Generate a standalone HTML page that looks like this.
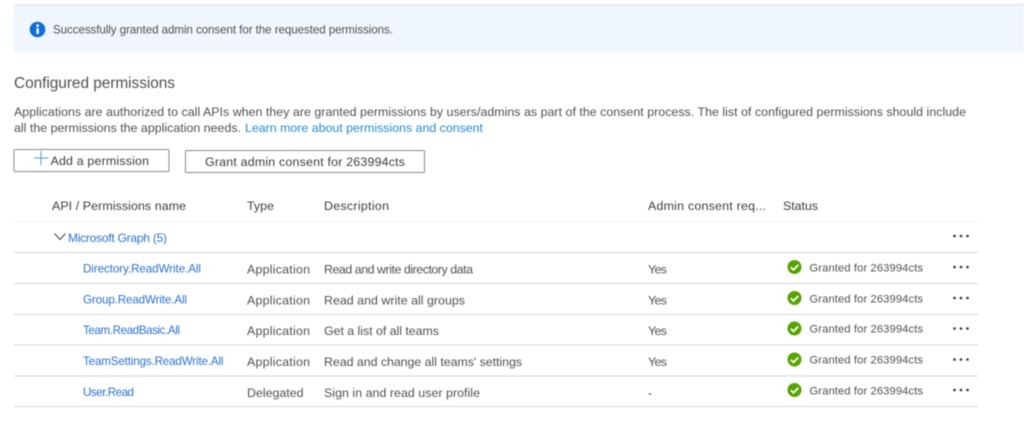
<!DOCTYPE html>
<html><head><meta charset="utf-8"><title>Configured permissions</title>
<style>
html,body{margin:0;padding:0;background:#fff;width:1024px;height:432px;overflow:hidden}
svg{display:block;filter:blur(.4px)}
text{font-family:"Liberation Sans",sans-serif;font-size:12.4px;fill:#505050;white-space:pre}
.h{fill:#3c3c3c}
.l{fill:#2a72d5;font-size:11.6px}
.a{fill:#1f8ad8}
.s{font-size:11.2px}
.b{font-size:11.6px}
</style></head><body>
<svg xmlns="http://www.w3.org/2000/svg" width="1024" height="432" viewBox="0 0 1024 432">
<rect x="14" y="4" width="1010" height="1.5" fill="#e6e6e6"/>
<rect x="14" y="5.500" width="1010" height="47" fill="#f0f6fd"/>
<circle cx="37.500" cy="29.500" r="7.800" fill="#0f6cd8"/>
<rect x="36.400" y="28.200" width="2.400" height="5.800" fill="#fff"/><circle cx="37.600" cy="25.600" r="1.400" fill="#fff"/>
<text x="53" y="33.500" textLength="340" lengthAdjust="spacing" class="b">Successfully granted admin consent for the requested permissions.</text>
<text x="14" y="88" textLength="161" lengthAdjust="spacing" style="font-size:15.4px">Configured permissions</text>
<text x="14" y="116" textLength="952" lengthAdjust="spacing">Applications are authorized to call APIs when they are granted permissions by users/admins as part of the consent process. The list of configured permissions should include</text>
<text x="14" y="132" textLength="227" lengthAdjust="spacing">all the permissions the application needs.</text>
<text x="245" y="132" textLength="238" lengthAdjust="spacing" class="a">Learn more about permissions and consent</text>
<rect x="14" y="149.500" width="155" height="22" rx="1" fill="#fff" stroke="#8a8a8a"/>
<path d="M41 151v14M34 158h14" stroke="#4f97d0" stroke-width="1" fill="none"/>
<text x="50.500" y="165" textLength="98.500" lengthAdjust="spacing" class="h">Add a permission</text>
<rect x="185.500" y="150.500" width="239" height="22" rx="1" fill="#fff" stroke="#8a8a8a"/>
<text x="205" y="166" textLength="200" lengthAdjust="spacing" class="h">Grant admin consent for 263994cts</text>
<text x="52" y="210" textLength="134" lengthAdjust="spacing" class="h">API / Permissions name</text>
<text x="247" y="210" textLength="27" lengthAdjust="spacing" class="h">Type</text>
<text x="324" y="210" textLength="65" lengthAdjust="spacing" class="h">Description</text>
<text x="648" y="210" textLength="118" lengthAdjust="spacing" class="h">Admin consent req...</text>
<text x="783" y="210" textLength="35" lengthAdjust="spacing" class="h">Status</text>
<rect x="14" y="221" width="964" height="1" fill="#eeeeee"/>
<path d="M54.500 233.500l5.500 6 5.500-6" stroke="#444" stroke-width="1" fill="none"/>
<text x="68" y="242" textLength="99" lengthAdjust="spacing" class="l" style="font-size:12px">Microsoft Graph (5)</text>
<g fill="#333"><circle cx="954.500" cy="236" r="1.300"/><circle cx="961" cy="236" r="1.300"/><circle cx="967.500" cy="236" r="1.300"/></g>
<rect x="14" y="252" width="964" height="1" fill="#d4d4d4"/>
<rect x="14" y="283" width="964" height="1" fill="#d4d4d4"/>
<rect x="14" y="314" width="964" height="1" fill="#d4d4d4"/>
<rect x="14" y="344.500" width="964" height="1" fill="#d4d4d4"/>
<rect x="14" y="375.500" width="964" height="1" fill="#d4d4d4"/>
<rect x="14" y="406" width="964" height="1" fill="#d4d4d4"/>

<text x="83" y="272.500" textLength="118" lengthAdjust="spacing" class="l">Directory.ReadWrite.All</text>
<text x="247" y="273.500" textLength="63" lengthAdjust="spacing">Application</text>
<text x="324" y="273.500" textLength="149" lengthAdjust="spacing">Read and write directory data</text>
<text x="648" y="273.500" textLength="19" lengthAdjust="spacing">Yes</text>
<circle cx="794.500" cy="267" r="7" fill="#57a300"/><path d="M790.800 267.200l2.700 2.700 4.800-5" stroke="#fff" stroke-width="1.700" fill="none"/>
<text x="809.500" y="271.500" textLength="113.500" lengthAdjust="spacing" class="s">Granted for 263994cts</text>
<g fill="#333"><circle cx="954.500" cy="267" r="1.300"/><circle cx="961" cy="267" r="1.300"/><circle cx="967.500" cy="267" r="1.300"/></g>

<text x="83" y="303.500" textLength="104" lengthAdjust="spacing" class="l">Group.ReadWrite.All</text>
<text x="247" y="304.500" textLength="63" lengthAdjust="spacing">Application</text>
<text x="324" y="304.500" textLength="141" lengthAdjust="spacing">Read and write all groups</text>
<text x="648" y="304.500" textLength="19" lengthAdjust="spacing">Yes</text>
<circle cx="794.500" cy="298" r="7" fill="#57a300"/><path d="M790.800 298.200l2.700 2.700 4.800-5" stroke="#fff" stroke-width="1.700" fill="none"/>
<text x="809.500" y="302.500" textLength="113.500" lengthAdjust="spacing" class="s">Granted for 263994cts</text>
<g fill="#333"><circle cx="954.500" cy="298" r="1.300"/><circle cx="961" cy="298" r="1.300"/><circle cx="967.500" cy="298" r="1.300"/></g>

<text x="83" y="334" textLength="97" lengthAdjust="spacing" class="l">Team.ReadBasic.All</text>
<text x="247" y="335" textLength="63" lengthAdjust="spacing">Application</text>
<text x="324" y="335" textLength="115" lengthAdjust="spacing">Get a list of all teams</text>
<text x="648" y="335" textLength="19" lengthAdjust="spacing">Yes</text>
<circle cx="794.500" cy="328.500" r="7" fill="#57a300"/><path d="M790.800 328.700l2.700 2.700 4.800-5" stroke="#fff" stroke-width="1.700" fill="none"/>
<text x="809.500" y="332.500" textLength="113.500" lengthAdjust="spacing" class="s">Granted for 263994cts</text>
<g fill="#333"><circle cx="954.500" cy="328.500" r="1.300"/><circle cx="961" cy="328.500" r="1.300"/><circle cx="967.500" cy="328.500" r="1.300"/></g>

<text x="83" y="365" textLength="140.500" lengthAdjust="spacing" class="l">TeamSettings.ReadWrite.All</text>
<text x="247" y="366" textLength="63" lengthAdjust="spacing">Application</text>
<text x="324" y="366" textLength="198" lengthAdjust="spacing">Read and change all teams' settings</text>
<text x="648" y="366" textLength="19" lengthAdjust="spacing">Yes</text>
<circle cx="794.500" cy="359.500" r="7" fill="#57a300"/><path d="M790.800 359.700l2.700 2.700 4.800-5" stroke="#fff" stroke-width="1.700" fill="none"/>
<text x="809.500" y="363.500" textLength="113.500" lengthAdjust="spacing" class="s">Granted for 263994cts</text>
<g fill="#333"><circle cx="954.500" cy="359.500" r="1.300"/><circle cx="961" cy="359.500" r="1.300"/><circle cx="967.500" cy="359.500" r="1.300"/></g>

<text x="83" y="396" textLength="51" lengthAdjust="spacing" class="l">User.Read</text>
<text x="247" y="397" textLength="56.500" lengthAdjust="spacing">Delegated</text>
<text x="324" y="397" textLength="156" lengthAdjust="spacing">Sign in and read user profile</text>
<text x="648" y="397">-</text>
<circle cx="794.500" cy="390" r="7" fill="#57a300"/><path d="M790.800 390.200l2.700 2.700 4.800-5" stroke="#fff" stroke-width="1.700" fill="none"/>
<text x="809.500" y="394.500" textLength="113.500" lengthAdjust="spacing" class="s">Granted for 263994cts</text>
<g fill="#333"><circle cx="954.500" cy="390" r="1.300"/><circle cx="961" cy="390" r="1.300"/><circle cx="967.500" cy="390" r="1.300"/></g>
</svg>
</body></html>
